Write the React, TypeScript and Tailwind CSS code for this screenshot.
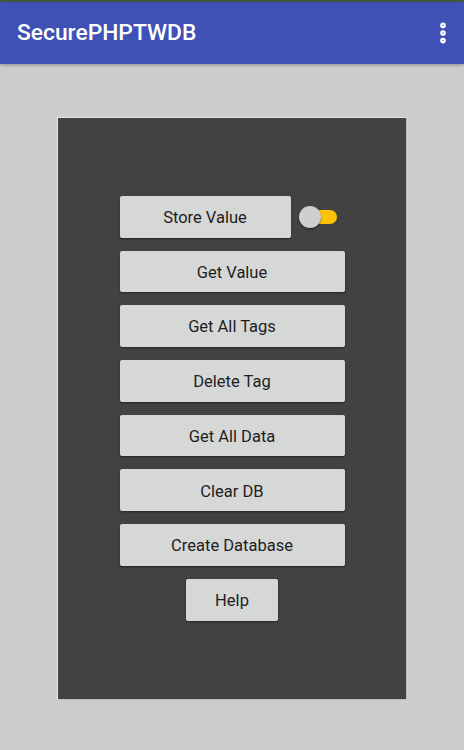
import { EllipsisVertical } from 'lucide-react'

const buttons = ['Get Value', 'Get All Tags', 'Delete Tag', 'Get All Data', 'Clear DB', 'Create Database']

function Btn({ label, className }: { label: string; className: string }) {
  return (
    <button
      type="button"
      className={`h-[41.7px] rounded-[2px] bg-[#d6d7d7] pt-[3px] text-[16.5px] leading-none text-[#1e1e1e] shadow-[0_1px_2px_rgba(0,0,0,0.45)] ${className}`}
    >
      {label}
    </button>
  )
}

export default function App() {
  return (
    <div className="flex h-[750px] w-[464px] flex-col bg-[#cccccc]" style={{ fontFamily: 'Roboto, "Liberation Sans", sans-serif' }}>
      {/* status strip */}
      <div className="h-[2px] bg-[#3f5a3c]" />

      {/* app bar */}
      <div className="flex h-[62px] items-center justify-between bg-[#3f51b5] pl-[17px] pr-[8px] shadow-[0_1px_3px_rgba(0,0,0,0.3)]">
        <h1 className="text-[22.8px] font-medium text-white">SecurePHPTWDB</h1>
        <EllipsisVertical size={26} strokeWidth={3.2} className="text-white" />
      </div>

      {/* panel */}
      <div className="ml-[57px] mt-[53px] flex h-[583px] w-[350px] flex-col items-center border border-[#e6e6e6] border-r-[#bdbdbd] border-b-[#bdbdbd] bg-[#424242] pt-[78px]">
        <div className="flex w-[225px] items-center gap-[8px]">
          <Btn label="Store Value" className="w-[171px]" />
          {/* switch */}
          <div className="relative h-[22px] w-[38px]">
            <div className="absolute left-[6px] right-0 top-[4px] h-[14px] rounded-full bg-[#ffc107]" />
            <div className="absolute left-0 top-0 h-[22px] w-[22px] rounded-full bg-[#cfcfcf] shadow-[0_1px_2px_rgba(0,0,0,0.5)]" />
          </div>
        </div>
        <div className="mt-[13px] flex flex-col items-center gap-[13px]">
          {buttons.map((b) => (
            <Btn key={b} label={b} className="w-[225px]" />
          ))}
          <Btn label="Help" className="w-[92px]" />
        </div>
      </div>
    </div>
  )
}
